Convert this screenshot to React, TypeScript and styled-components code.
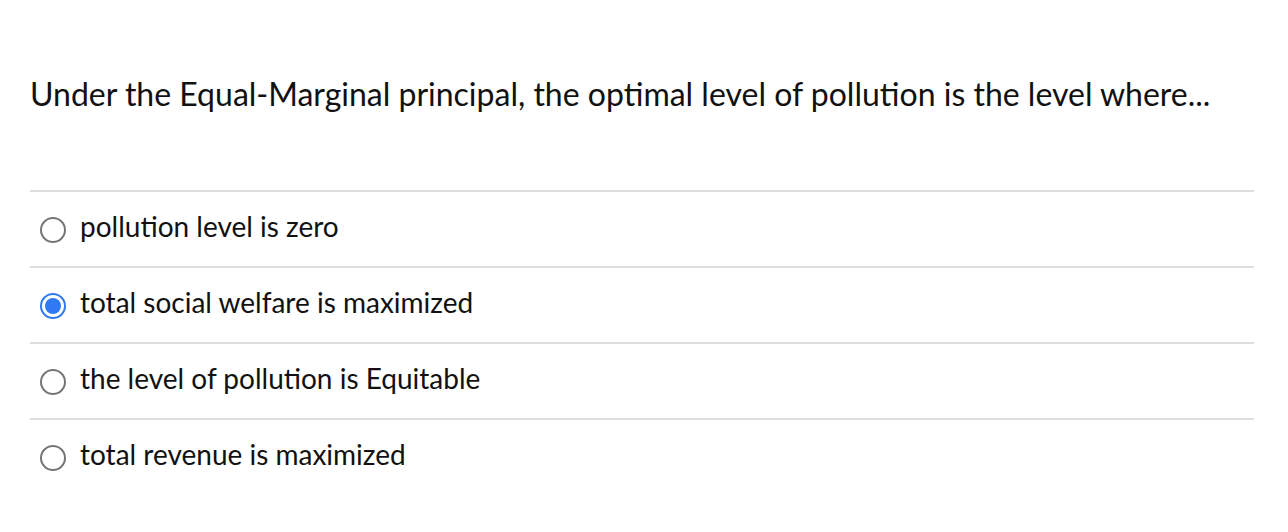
import React, { useState } from 'react';
import styled, { createGlobalStyle } from 'styled-components';

const GlobalStyle = createGlobalStyle`
  html, body {
    margin: 0;
    padding: 0;
    background: #ffffff;
  }
  body {
    font-family: Lato, "Open Sans", sans-serif;
    color: #1a1a1a;
  }
`;

const Page = styled.div`
  padding: 72px 34px 0 30px;
`;

const Question = styled.h1`
  margin: 0;
  font-size: 32px;
  font-weight: 400;
  line-height: 44px;
  color: #111111;
`;

const Options = styled.div`
  margin-top: 74px;
  display: flex;
  flex-direction: column;
`;

const Option = styled.label`
  display: flex;
  align-items: center;
  gap: 14px;
  height: 76px;
  border-top: 2px solid #dedede;
  box-sizing: border-box;
  padding-left: 10px;
  padding-bottom: 7px;
  cursor: pointer;
  font-size: 28px;
  line-height: 34px;
  color: #111111;
`;

const Radio = styled.span<{ $checked: boolean }>`
  width: 26px;
  height: 26px;
  box-sizing: border-box;
  border-radius: 50%;
  border: 2px solid ${p => (p.$checked ? '#2f7af4' : '#767676')};
  display: flex;
  align-items: center;
  justify-content: center;
  flex-shrink: 0;
  margin-top: 8px;

  &::after {
    content: '';
    width: 16px;
    height: 16px;
    border-radius: 50%;
    background: ${p => (p.$checked ? '#2f7af4' : 'transparent')};
  }
`;

const HiddenInput = styled.input`
  position: absolute;
  opacity: 0;
  pointer-events: none;
`;

const answers = [
  'pollution level is zero',
  'total social welfare is maximized',
  'the level of pollution is Equitable',
  'total revenue is maximized',
];

export default function App() {
  const [selected, setSelected] = useState(1);
  return (
    <>
      <GlobalStyle />
      <Page>
        <Question>
          Under the Equal-Marginal principal, the optimal level of pollution is the level where...
        </Question>
        <Options>
          {answers.map((a, i) => (
            <Option key={a}>
              <HiddenInput
                type="radio"
                name="answer"
                checked={selected === i}
                onChange={() => setSelected(i)}
              />
              <Radio $checked={selected === i} />
              {a}
            </Option>
          ))}
        </Options>
      </Page>
    </>
  );
}
